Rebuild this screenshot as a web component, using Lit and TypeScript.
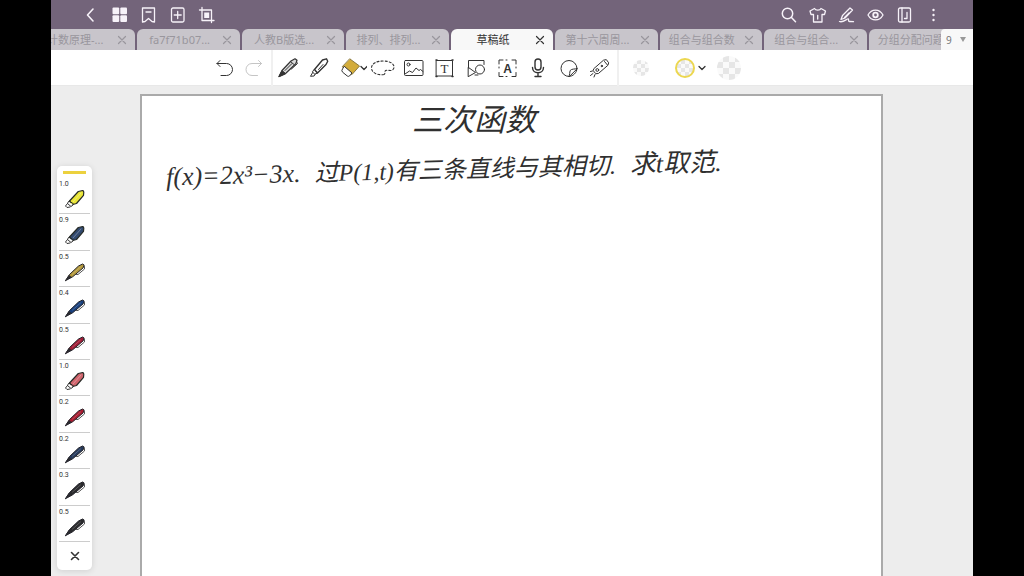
import { LitElement, html, css, svg } from "lit";
import { customElement, state } from "lit/decorators.js";
import { classMap } from "lit/directives/class-map.js";

const chevron = (x: number) => svg`<path d="M${x} 10.5l3 3 3-3" stroke-width="1.3"/>`;

const headerIcons: Record<string, unknown> = {
  back: svg`<path d="M17 6L11.500 12l5.500 6" stroke-width="1.6"/>`,
  grid: svg`<g fill="currentColor" stroke="none"><rect x="7.500" y="4.500" width="6.700" height="6.700" rx="1"/><rect x="15.300" y="4.500" width="6.700" height="6.700" rx="1"/><rect x="7.500" y="12.300" width="6.700" height="6.700" rx="1"/><rect x="15.300" y="12.300" width="6.700" height="6.700" rx="1"/></g>`,
  bookmark: svg`<path d="M8.500 5h12v14l-2.500-.5-3.500-3-3.500 3-2.500.5z"/><path d="M12 9h5"/>`,
  add: svg`<rect x="8.500" y="5" width="12.500" height="14" rx="1.500"/><path d="M14.700 8.500v7M11.200 12h7"/>`,
  crop: svg`<path d="M10 4.500v13h12M7.500 7h12v12.500"/><rect x="12.200" y="9.500" width="5" height="5.500" fill="currentColor" stroke="none"/>`,
  search: svg`<circle cx="13.500" cy="10.500" r="5.200" stroke-width="1.500"/><path d="M17.500 14.500l4 4.200" stroke-width="1.500"/>`,
  shirt: svg`<path d="M11.500 5.500l-4.500 2.500 1 3.500h2.500V19h8.500v-7.500h2.500l1-3.500-4.500-2.500c-1 2.200-5.500 2.200-6.500 0z"/><path d="M14.700 12.500v3.500"/>`,
  write: svg`<path d="M9 16.500l1.500-4 7.500-7.500 2.500 2-7.500 8z"/><path d="M7.500 18.500c3 1.200 6-1.500 8-2.500s0 2.500 2 2.500l4 .2M12.500 14.500l4.500-4.500"/>`,
  eye: svg`<path d="M7 12c3.500-6.500 11.500-6.500 15 0-3.500 6.500-11.500 6.500-15 0z"/><circle cx="14.500" cy="12" r="2.300" stroke-width="1.800"/>`,
  panel: svg`<rect x="8.500" y="5" width="12" height="14" rx="1.500"/><path d="M12 5v14M17 9.500v6h-2.500"/>`,
  more: svg`<g fill="currentColor" stroke="none"><circle cx="14.500" cy="7" r="1.200"/><circle cx="14.500" cy="12" r="1.200"/><circle cx="14.500" cy="17" r="1.200"/></g>`,
};

const toolIcons: Record<string, unknown> = {
  pen: svg`<path d="M6 20.500l3-6 9-9.500 4-2.200 2 1.500-1.200 3.500-10 9.500z" fill="#ddd" stroke-width="1.200"/><path d="M6 20.500l3-6 3.500 3z" fill="currentColor"/><path d="M12 14.500l7-7M17.500 5.500l3.500 3M24 6.500l.5 1-6 5.500"/>`,
  marker: svg`<path d="M10.500 13.500l8-9.500 4-1.200 1.200 2.400-1.700 3.300-8.500 8.500z" stroke-width="1.400"/><path d="M10.500 13.500l3.200 3.500-3 1.200-2-2zM8.700 16.500l-2.200 3.800 3.600-.3 1-1.800M14.500 13.500l4.500-5"/>`,
  eraser: svg`<path d="M14 3l9.500 7-7.500 8.500-9.500-7.500z" fill="#d3ac3b" stroke="#8b7a3e"/><path d="M8.500 10.500l7.500 6.500-2.500 3q-1 .8-2.200 0l-4.700-3.800q-1.500-1.500-.3-3z" fill="#fff"/>${chevron(25)}`,
  lasso: svg`<path d="M17 18.500c-7 1-12.500-2-12.500-6.500s5-7 11.500-7 11 2.500 11 6c0 2-1.500 3.500-3.500 3.500-2.500 0-5-.8-5.500.8-.4 1.200.5 2.200-1 3.200z" stroke-dasharray="2 2.100" stroke-width="1.100"/>`,
  image: svg`<rect x="6.500" y="4.500" width="18.500" height="15" rx="1"/><circle cx="10.500" cy="8.500" r="1.500"/><path d="M7 18l4.500-3 3 1.500 3.500-4.500 3 2.500 1.500-1 2.500 2"/>`,
  text: svg`<rect x="7.500" y="4.500" width="16" height="15.500"/><text class="serif-mark" x="15.500" y="17" text-anchor="middle">T</text><path d="M7 4h1M23 4h1M7 20.500h1M23 20.500h1" stroke-width="1.500"/>`,
  shapes: svg`<path d="M7.500 12V4.500h15.500V8.500M17 19h-3"/><circle cx="19" cy="13.500" r="4.500"/><path d="M7.500 11.500l7 5-7 4z"/>`,
  recognise: svg`<path d="M7 8V4h4M20 4h4v4M24 16.500v4h-4M11 20.500H7v-4"/><path d="M14 4h3M14 20.500h3M7 11v3M24 11v3" stroke-dasharray="1 2"/><text class="bold-mark" x="15.500" y="16.500" text-anchor="middle">A</text>`,
  mic: svg`<rect x="12" y="3" width="6" height="11" rx="3" stroke-width="1.400"/><path d="M9.500 11.500c0 7 11 7 11 0M15 17v3.500M12 20.500h6" stroke-width="1.400"/>`,
  sticker: svg`<path d="M22 12.500a8 8 0 1 0-8 8zM14 20.500c1-2 .5-4 1.200-6 1.500-2 4.500-1 6.800-2"/><path d="M22 12.500c0 4-4 8-8 8"/>`,
  tape: svg`<path d="M8 12.500l9.500-8.300 2.800-.6 2.400 3.200-.8 2.500-9.500 8.200-2.600.2-2.300-2.700z"/><circle cx="11.300" cy="14" r="1.400"/><circle cx="15.800" cy="10" r=".7" fill="currentColor"/><path d="M18.500 5.500l2.700 3.200M6.500 15l-2 .5M7 17.500l-2.500 2M9 18.500l-1 2.500"/>`,
};

const brushShapes: Record<string, (c: string) => unknown> = {
  marker: (c) => svg`<path d="M4.500 11L13.300 1.500l4.700-1 .8 1.500-.3 3.300-7 8.200-5.500 1.500z" fill="${c}" stroke="#262a26" stroke-width="1.200"/><path d="M3.500 11.500l-1 2 3.500 3 2-1.500M2.500 13.500l-2 2.500 1.500 1.500 3-.5" fill="#fff" stroke="#333"/><path d="M8 12l8-9" stroke="#fff" stroke-opacity=".3"/><path d="M4.500 11l4 3" stroke="#262a26"/>`,
  pen: (c) => svg`<path d="M.5 17.500l4-6L13.500 3l4-2 1.700 1L18 5 8 13.500z" fill="${c}" stroke="#24242a"/><path d="M.5 17.500l3.500-5.500 3 2.300z" fill="#2a2a30" stroke="none"/><path d="M11.500 11.500l1.500 0L19.500 6V3.500" stroke="#555"/><path d="M7.500 11l8-7" stroke="#fff" stroke-opacity=".22"/>`,
};

const brushes = [
  { size: "1.0", kind: "marker", color: "#e9e536" },
  { size: "0.9", kind: "marker", color: "#31496f" },
  { size: "0.5", kind: "pen", color: "#b59a3c" },
  { size: "0.4", kind: "pen", color: "#173f7d" },
  { size: "0.5", kind: "pen", color: "#a21c36" },
  { size: "1.0", kind: "marker", color: "#d0646c" },
  { size: "0.2", kind: "pen", color: "#a91c30" },
  { size: "0.2", kind: "pen", color: "#263a5c" },
  { size: "0.3", kind: "pen", color: "#29292c" },
  { size: "0.5", kind: "pen", color: "#29292c" },
];

const tabs = [
  "计数原理-...",
  "fa7f71b07...",
  "人教B版选...",
  "排列、排列...",
  "草稿纸",
  "第十六周周...",
  "组合与组合数",
  "组合与组合...",
  "分组分配问题",
];

const cross = html`<svg class="cross" viewBox="0 0 10 10" aria-hidden="true"><path d="M1.500 1.500l7 7M8.500 1.500l-7 7" /></svg>`;

@customElement("app-root")
export class AppRoot extends LitElement {
  @state() private active = 4;

  static styles = css`
    :host {
      display: flex;
      flex-direction: column;
      box-sizing: border-box;
      height: 100vh;
      padding: 0 51px;
      overflow: hidden;
      background: #000;
      font-family: "Noto Sans", "Noto Sans CJK SC", sans-serif;
      color: #333;
    }
    button {
      margin: 0;
      padding: 0;
      border: 0;
      background: none;
      color: inherit;
      font: inherit;
      cursor: pointer;
    }
    svg {
      display: block;
      fill: none;
      stroke: currentColor;
      stroke-linecap: round;
      stroke-linejoin: round;
    }
    .header {
      display: flex;
      justify-content: space-between;
      align-items: center;
      height: 29px;
      padding: 0 25px;
      background: #73647a;
      color: #f7f2f9;
    }
    .group {
      display: flex;
      align-items: center;
    }
    .header svg {
      width: 29px;
      height: 24px;
      stroke-width: 1.3;
    }
    .tabbar {
      position: relative;
      display: flex;
      height: 21px;
      overflow: hidden;
      background: #73647a;
    }
    .tabs {
      display: flex;
      flex: 1;
      margin-left: -18px;
    }
    .tab {
      display: flex;
      flex: 1 1 0;
      min-width: 0;
      align-items: center;
      box-sizing: border-box;
      margin-right: 2px;
      padding-right: 8px;
      border-radius: 6px 6px 0 0;
      background: #c8c5cb;
      color: #99969d;
      font-size: 11px;
      line-height: 20px;
    }
    .tab.active {
      background: #f8f8f8;
      color: #333;
    }
    .name {
      flex: 1;
      white-space: nowrap;
    }
    .cross {
      width: 10px;
      height: 10px;
      stroke-width: 1.2;
    }
    .count {
      position: absolute;
      right: 0;
      top: 0;
      display: flex;
      align-items: center;
      gap: 8px;
      width: 32px;
      height: 21px;
      padding-left: 5px;
      box-sizing: border-box;
      border-radius: 4px 0 0 0;
      background: #f8f8f8;
      color: #777;
      font-size: 10px;
    }
    .caret {
      width: 6px;
      height: 5px;
      fill: #999;
      stroke: none;
    }
    .toolbar {
      display: flex;
      align-items: center;
      height: 36px;
      padding-left: 159px;
      background: #fff;
      border-bottom: 1px solid #e8e8e8;
      box-sizing: border-box;
    }
    .history svg {
      width: 29px;
      height: 24px;
    }
    .disabled {
      color: #c5c5c5;
    }
    .tools {
      height: 36px;
      margin-left: 3px;
      border: 1px solid #f0f0f0;
      border-width: 0 2px;
      width: 344px;
      justify-content: space-between;
    }
    .tools svg {
      width: 31px;
      height: 24px;
    }
    .serif-mark,
    .bold-mark {
      fill: currentColor;
      stroke: none;
      font: 13px "Liberation Serif", serif;
    }
    .bold-mark {
      font: bold 12px "Liberation Sans", sans-serif;
    }
    .swatches {
      gap: 10px;
      padding-left: 14px;
    }
    .swatch {
      display: flex;
      align-items: center;
    }
    .checker {
      box-sizing: border-box;
      width: 16px;
      height: 16px;
      border-radius: 50%;
      background: repeating-conic-gradient(#e6e6e6 0 25%, #fafafa 0 50%) 0 0 / 8px 8px;
    }
    .checker.chosen {
      width: 20px;
      height: 20px;
      border: 2px solid #ecd750;
    }
    .checker.large {
      width: 24px;
      height: 24px;
      background-size: 12px 12px;
    }
    .spread {
      margin-left: 16px;
    }
    .down {
      width: 12px;
      height: 24px;
    }
    .workspace {
      display: flex;
      flex: 1;
      align-items: flex-start;
      min-height: 0;
      overflow: hidden;
      padding: 8px 90px 0 6px;
      background: #ededed;
    }
    .brushes {
      display: flex;
      flex: none;
      flex-direction: column;
      align-items: center;
      width: 35px;
      margin: 72px 48px 0 0;
      border-radius: 5px;
      background: #fff;
      box-shadow: 0 1px 6px #00000020;
    }
    .current {
      width: 23px;
      height: 3px;
      margin: 5px 0 4px;
      background: #ecd13e;
    }
    .brush-list {
      display: flex;
      flex-direction: column;
      width: 31px;
      height: 364px;
      margin: 0;
      padding: 0;
      list-style: none;
    }
    .brush {
      flex: 1;
      box-sizing: border-box;
      border-bottom: 1px solid #ccc;
    }
    .brush button {
      display: flex;
      flex-direction: column;
      align-items: flex-start;
      width: 100%;
    }
    .size {
      font-family: Roboto, sans-serif;
      font-size: 7px;
      line-height: 12px;
      color: #333;
    }
    .brush svg {
      width: 21px;
      height: 20px;
      margin-left: 6px;
    }
    .close {
      display: grid;
      place-items: center;
      width: 31px;
      height: 28px;
    }
    .close .cross {
      stroke-width: 1.6;
    }
    .page {
      flex: 1;
      align-self: stretch;
      min-width: 0;
      border: 2px solid #aaa;
      border-bottom: 0;
      background: #fff;
      color: #303030;
      font-family: "Liberation Serif", "Noto Sans CJK SC", serif;
      font-style: italic;
    }
    .title {
      margin: 4px 0 0 270px;
      font-size: 31px;
      font-weight: 400;
      line-height: 42px;
    }
    .problem {
      display: flex;
      gap: 14px;
      align-items: baseline;
      max-width: 564px;
      margin: 12px 24px 0;
      font-size: 24px;
      line-height: 32px;
      white-space: nowrap;
      transform: rotate(-1.5deg);
    }
    .math {
      font-size: 26px;
    }
  `;

  private headerButton(id: string, label: string) {
    return html`<button aria-label=${label}><svg viewBox="0 0 29 24">${headerIcons[id]}</svg></button>`;
  }

  render() {
    return html`
      <header class="header">
        <div class="group">
          ${this.headerButton("back", "返回")}${this.headerButton("grid", "缩略图")}
          ${this.headerButton("bookmark", "书签")}${this.headerButton("add", "添加页面")}
          ${this.headerButton("crop", "裁剪")}
        </div>
        <div class="group">
          ${this.headerButton("search", "搜索")}${this.headerButton("shirt", "主题")}
          ${this.headerButton("write", "书写")}${this.headerButton("eye", "阅读")}
          ${this.headerButton("panel", "侧栏")}${this.headerButton("more", "更多")}
        </div>
      </header>
      <nav class="tabbar">
        <div class="tabs">
          ${tabs.map(
            (name, i) => html`<div class=${classMap({ tab: true, active: i === this.active })}>
              <button class="name" @click=${() => (this.active = i)}>${name}</button>
              <button aria-label="关闭">${cross}</button>
            </div>`
          )}
        </div>
        <button class="count">9<svg class="caret" viewBox="0 0 6 5"><path d="M0 0h6L3 5z" /></svg></button>
      </nav>
      <div class="toolbar">
        <div class="group history">
          <button aria-label="撤销"><svg viewBox="0 0 29 24"><path d="M10 4.500L7 7.500l3 3M7 7.500h9.500a5.800 5.800 0 0 1 0 12H11" /></svg></button>
          <button class="disabled" aria-label="重做"><svg viewBox="0 0 29 24"><path d="M19.500 4.500l3 3-3 3M22.500 7.500H13a5.800 5.800 0 0 0 0 12h5.500" /></svg></button>
        </div>
        <div class="group tools">
          ${Object.entries(toolIcons).map(
            ([id, icon]) => html`<button aria-label=${id}><svg viewBox="0 0 31 24">${icon}</svg></button>`
          )}
        </div>
        <div class="group swatches">
          <button class="swatch" aria-label="小"><span class="checker"></span></button>
          <button class="swatch spread" aria-label="中">
            <span class="checker chosen"></span>
            <svg class="down" viewBox="0 0 12 24">${chevron(4)}</svg>
          </button>
          <button class="swatch" aria-label="大"><span class="checker large"></span></button>
        </div>
      </div>
      <main class="workspace">
        <aside class="brushes">
          <div class="current"></div>
          <ul class="brush-list">
            ${brushes.map(
              (b) => html`<li class="brush">
                <button><span class="size">${b.size}</span><svg viewBox="0 0 21 20">${brushShapes[b.kind](b.color)}</svg></button>
              </li>`
            )}
          </ul>
          <button class="close" aria-label="收起">${cross}</button>
        </aside>
        <article class="page">
          <h1 class="title">三次函数</h1>
          <p class="problem">
            <span class="math">f(x)=2x³−3x.</span>
            <span>过P(1,t)有三条直线与其相切.</span>
            <span class="math">求t取范.</span>
          </p>
        </article>
      </main>
    `;
  }
}
